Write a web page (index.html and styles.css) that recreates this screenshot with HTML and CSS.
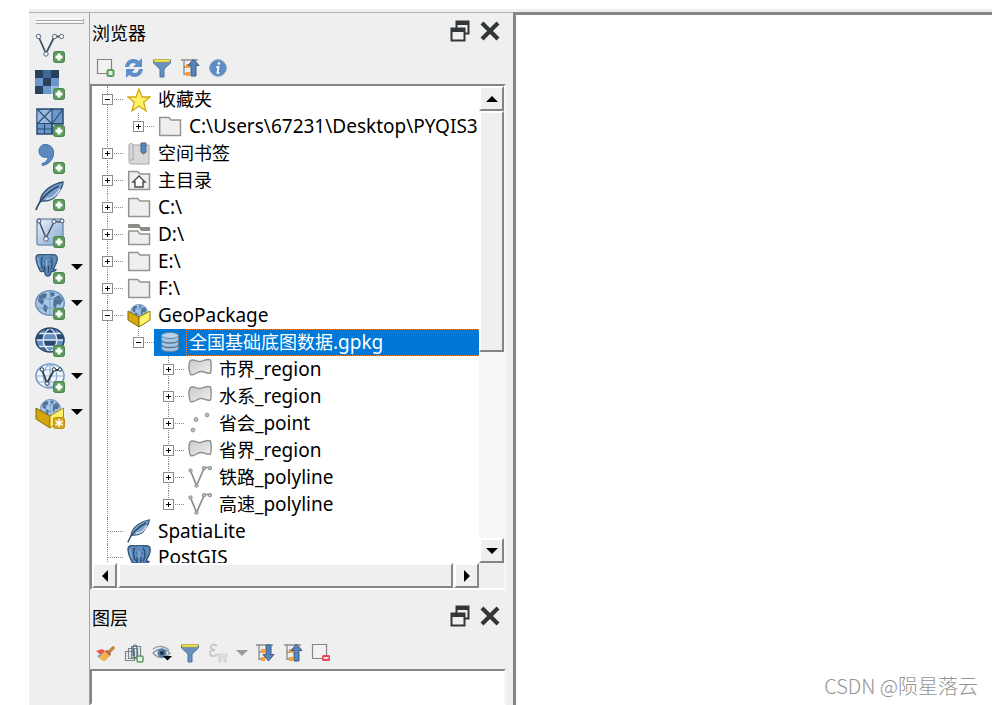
FILE: index.html
```
<!DOCTYPE html>
<html lang="zh-CN">
<head>
	<meta charset="UTF-8">
	<title>浏览器</title>
	<link rel="stylesheet" href="styles.css">
</head>
<body>
	<!-- 图标 -->
	<svg class="sprite" width="0" height="0" aria-hidden="true">
		<defs>
			<linearGradient id="grey" x1="0" y1="0" x2="1" y2="1"><stop offset="0" stop-color="#c9c9c9"/><stop offset="1" stop-color="#f0f0f0"/></linearGradient>
			<linearGradient id="blue" x1="0" y1="0" x2="1" y2="1"><stop offset="0" stop-color="#eef3f9"/><stop offset="1" stop-color="#7ea3cf"/></linearGradient>
		</defs>
		<symbol id="plus" viewBox="0 0 12 12">
			<rect x=".5" y=".5" width="11" height="11" rx="2" fill="#5a9a5a" stroke="#4c854d"/>
			<path d="M6 2.500v7M2.500 6h7" stroke="#fff" stroke-width="3"/>
		</symbol>
		<symbol id="vector" viewBox="0 0 30 30">
			<path d="M3.500 3.500l7.500 17L19.500 3.500h7" fill="none" stroke="#415368" stroke-width="1.800"/>
			<g fill="#f4f4f4" stroke="#56687a"><circle cx="3.500" cy="3.500" r="2.200"/><circle cx="11" cy="21" r="2.200"/><circle cx="19.500" cy="3.500" r="2.200"/><circle cx="26.500" cy="3.500" r="2.200"/></g>
			<use href="#plus" x="18" y="18" width="12" height="12"/>
		</symbol>
		<symbol id="raster" viewBox="0 0 30 30">
			<path fill="#6c97cb" d="M0 0h24v24H0z"/>
			<path fill="#27415f" d="M0 0h8v8H0zM16 0h8v8h-8zM8 8h8v8H8zM0 16h8v8H0z"/>
			<path fill="#3f6797" d="M8 0h8v8H8z"/>
			<path fill="#9dbde1" d="M16 16h8v8h-8z"/>
			<use href="#plus" x="18" y="18" width="12" height="12"/>
		</symbol>
		<symbol id="mesh" viewBox="0 0 30 30">
			<path d="M2 2h26v15H17v10H2z" fill="#6c97cb" stroke="#294a70" stroke-width="1.500"/>
			<path d="M2.500 3h14v13h-14z" fill="#9bb9dc"/>
			<path d="M17 1v26M2 16.500h26M9.500 17v10M2 22h15M2 2l15 15M17 2L2 17M28 2L17 17" fill="none" stroke="#294a70" stroke-width="1.100"/>
			<use href="#plus" x="18" y="18" width="12" height="12"/>
		</symbol>
		<symbol id="comma" viewBox="0 0 30 30">
			<path d="M10 .5c6 0 9 4 8.500 9.500-.6 6-5 10.500-11 11.500l-.5-2c4-1 6-3.500 6-6.500-5 1.500-9-1.500-9-5.700C4 3.500 6.500.5 10 .5z" fill="#5b88bf" stroke="#4270a6"/>
			<use href="#plus" x="18" y="18" width="12" height="12"/>
		</symbol>
		<symbol id="quill" viewBox="0 0 30 30">
			<path d="M28 1C18 3 7 9 5 20c8 1 15-2 18-8 3-4 5-6 5-11z" fill="#7ba0cd" stroke="#34526f" stroke-width="1.300"/>
			<path d="M1 29C4 20 13 10 24 5" fill="none" stroke="#2d4a68" stroke-width="1.800"/>
			<path d="M11 18c5 0 10-3 14-10" fill="none" stroke="#c1d5eb" stroke-width="2"/>
		</symbol>
		<symbol id="quill-add" viewBox="0 0 30 30">
			<use href="#quill" width="30" height="30"/>
			<use href="#plus" x="18" y="18" width="12" height="12"/>
		</symbol>
		<symbol id="virtual" viewBox="0 0 30 30">
			<rect x="2" y="1" width="26" height="26" rx="2" fill="url(#blue)" stroke="#7994b5" stroke-width="1.500"/>
			<path d="M4 3l7 17 8-16c3-2 6 2 8-1" fill="none" stroke="#41566d" stroke-width="1.500"/>
			<g fill="#edf2f8" stroke="#46596e"><circle cx="4" cy="3" r="2"/><circle cx="11" cy="21" r="2.300"/><circle cx="19" cy="3.500" r="2"/><circle cx="27" cy="3" r="2"/></g>
			<use href="#plus" x="18" y="18" width="12" height="12"/>
		</symbol>
		<symbol id="elephant" viewBox="0 0 24 24">
			<path d="M1 4C1 0 6 0 9 1c3-1.500 6-1 8 0 5-1 7 1 6 6-1 4-3 7-4 9l3 .5c-1 2-4 2-5 1.500-.5 2 0 5-4 5-3 0-3-4-3-6-2 2-4 2-5 0C3 13 1 8 1 4z" fill="#5e8abb" stroke="#2f5275" stroke-width="1.300"/>
			<path d="M8 3C5 6 7 9 7 12c0 2 1 3 3 4M16 3c3 3 1 5 2 8 0 2-1 3-2 5M10 12v5M14 12v8M9 8h1M15 8h1" fill="none" stroke="#294b6d" stroke-width="1.200"/>
			<path d="M3 4c0 4 1 6 2 9M12 6v7" stroke="#8aaed5" stroke-width="1.500" fill="none"/>
		</symbol>
		<symbol id="postgis-add" viewBox="0 0 30 30">
			<use href="#elephant" width="23" height="23"/>
			<use href="#plus" x="18" y="18" width="12" height="12"/>
		</symbol>
		<symbol id="earth" viewBox="0 0 30 26">
			<ellipse cx="15" cy="13" rx="14.300" ry="12.300" fill="#a9c6e7" stroke="#668bb4" stroke-width="1.300"/>
			<path d="M4 6l5-3 3 1-1 4-3 1 1 3-2 3-4-4zM15 2l5 1-1 3-3 1zM19 8l5-3 4 5-3 5-3-1-2 6-2-5zM9 14l4 3-2 6-3-4z" fill="#4f7196"/>
			<path d="M2 9h26M2 18h26M15 1v24" stroke="#6f95bd" stroke-width=".8" fill="none"/>
		</symbol>
		<symbol id="wms" viewBox="0 0 30 30">
			<use href="#earth" width="30" height="26"/>
			<use href="#plus" x="18" y="18" width="12" height="12"/>
		</symbol>
		<symbol id="wcs" viewBox="0 0 30 30">
			<ellipse cx="15" cy="13" rx="14" ry="12" fill="#6790c2"/>
			<path d="M3.500 6.500h6L8 13H1zM20.500 6.500h6L29 13h-7zM9 13h12v6H9zM4 19h5l3 5.500zM10 2h10l1 4H9z" fill="#2a4c73"/>
			<path d="M3 6.500h24M1 13h28M3 19.500h24M15 1C6 7 6 19 15 25M15 1c9 6 9 18 0 24" fill="none" stroke="#dfeaf6" stroke-width="1.400"/>
			<ellipse cx="15" cy="13" rx="14" ry="12" fill="none" stroke="#294767" stroke-width="1.600"/>
			<use href="#plus" x="18" y="18" width="12" height="12"/>
		</symbol>
		<symbol id="wfs" viewBox="0 0 30 30">
			<ellipse cx="15" cy="13" rx="14" ry="12" fill="#f2f6fb" stroke="#6e9bcd" stroke-width="1.600"/>
			<path d="M3 7h24M1 13h28M3 19h24M15 1v24M15 1C6 7 6 19 15 25M15 1c9 6 9 18 0 24" fill="none" stroke="#8eb1da" stroke-width="1.200"/>
			<path d="M7 7l5 13 7-13h6" fill="none" stroke="#313d49" stroke-width="1.800"/>
			<g fill="#eee" stroke="#313d49"><circle cx="7" cy="6.500" r="1.800"/><circle cx="12" cy="20.500" r="1.800"/><circle cx="19" cy="6.500" r="1.800"/><circle cx="25" cy="6.500" r="1.800"/></g>
			<use href="#plus" x="18" y="18" width="12" height="12"/>
		</symbol>
		<symbol id="new-gpkg" viewBox="0 0 30 30">
			<use href="#earth" x="5" y="0" width="21" height="18"/>
			<path d="M1 9l14 8v12L1 20z" fill="#d3a50c" stroke="#84670d"/>
			<path d="M15 17l13.500-8v11L15 29z" fill="#fff06a" stroke="#a48a1f"/>
			<rect x="18.500" y="18.500" width="11" height="11" rx="2" fill="#d5a51f" stroke="#bd901a"/>
			<path d="M24 20v8M20.500 22l7 4M27.500 22l-7 4" stroke="#fff" stroke-width="1.500"/>
		</symbol>
		<symbol id="float" viewBox="0 0 20 22">
			<path d="M6.500 1.500h12v12h-12z" fill="#efefef" stroke="#333638" stroke-width="2"/>
			<path d="M6 1h13v4H6z" fill="#333638"/>
			<path d="M1.500 8.500h13v12h-13z" fill="#efefef" stroke="#333638" stroke-width="2"/>
			<path d="M1 8h14v4H1z" fill="#333638"/>
		</symbol>
		<symbol id="close" viewBox="0 0 20 20">
			<path d="M2 2l16 16M18 2L2 18" stroke="#333638" stroke-width="4.200"/>
		</symbol>
		<symbol id="add-layer" viewBox="0 0 20 20">
			<path d="M1.500 1.500h14v14h-14z" fill="#f2f2f2" stroke="#858585" stroke-width="1.200"/>
			<rect x="11.500" y="12" width="6" height="6" rx="1.500" fill="#e7f1e7" stroke="#5a9a5a" stroke-width="2"/>
		</symbol>
		<symbol id="remove" viewBox="0 0 20 20">
			<path d="M1.500 1.500h14v14h-14z" fill="#f2f2f2" stroke="#858585" stroke-width="1.200"/>
			<rect x="11" y="12" width="8" height="6" rx="1.500" fill="#e44a54"/><path d="M12.500 15h5" stroke="#fff" stroke-width="1.500"/>
		</symbol>
		<symbol id="refresh" viewBox="0 0 20 20">
			<path d="M1 9C2 1 10-1 15 3l3-3v9h-9l3-3C9 4 6 5 5 9z" fill="#5f8fca"/>
			<path d="M19 11c-1 8-9 10-14 6l-3 3v-9h9l-3 3c3 2 6 1 7-3z" fill="#5f8fca"/>
		</symbol>
		<symbol id="filter" viewBox="0 0 20 20">
			<path d="M1.500 2h17v3L12 11v8H8v-8L1.500 5z" fill="#6791c1" stroke="#4a719c"/>
			<path d="M2 1.500h16V4H2z" fill="#f5e34a" stroke="#b7a63c" stroke-width=".6"/>
		</symbol>
		<symbol id="collapse" viewBox="0 0 20 20">
			<path d="M4 2v15M1 2h17M4 9h5M4 16h5" fill="none" stroke="#8c8c8c" stroke-width="1.300"/>
			<path d="M6 6h4v4H6zM6 14h4v4H6z" fill="#ff9d2e"/>
			<path d="M13.500 1L19 7.500h-3V18h-5V7.500H8z" fill="#5984b5" stroke="#395f8a"/>
		</symbol>
		<symbol id="expand" viewBox="0 0 20 20">
			<path d="M4 2v15M1 2h17M4 9h5M4 16h5" fill="none" stroke="#8c8c8c" stroke-width="1.300"/>
			<path d="M6 6h4v4H6zM6 14h4v4H6z" fill="#ff9d2e"/>
			<path d="M13.500 18L19 11.500h-3V2h-5v9.500H8z" fill="#5984b5" stroke="#395f8a"/>
		</symbol>
		<symbol id="info" viewBox="0 0 20 20">
			<circle cx="10" cy="10" r="8.300" fill="#5e8dc6" stroke="#7a9ccc"/>
			<circle cx="11" cy="5.500" r="1.300" fill="#fff"/><path d="M8 9h2.500L9.500 15h2" fill="none" stroke="#fff" stroke-width="1.700"/>
		</symbol>
		<symbol id="brush" viewBox="0 0 20 20">
			<path d="M0 8l6-2 5 3-5 4z" fill="#e8574a"/><path d="M1 13l6-3 3 3-4 4z" fill="#6e9bd0"/>
			<path d="M11 9l6-6 2 2-6 6z" fill="#c98c3f" stroke="#a97836" stroke-width=".6"/>
			<path d="M3 14l6-6 5 5-5 5c-3 0-5-2-6-4z" fill="#f0b44a"/><path d="M9 8l2-1 4 4-1 2z" fill="#a4604a"/>
		</symbol>
		<symbol id="group" viewBox="0 0 20 20">
			<path d="M1.500 8.500h9v9h-9zM4.500 5.500h9v10h-9zM7.500 3.500h9v11h-9z" fill="#eee" stroke="#7e8588" stroke-width="1.200"/>
			<path d="M9 13V5c0-4 4-4 4 0v8c0 2-3 2-3 0V6" fill="none" stroke="#506b87" stroke-width="1.200"/>
			<rect x="13" y="13" width="6" height="6" rx="1.500" fill="#e7f1e7" stroke="#5a9a5a" stroke-width="1.500"/>
		</symbol>
		<symbol id="eye" viewBox="0 0 20 20">
			<path d="M1 6c5-4 12-3 16 1M1 10c5-5 12-5 17 0-5 6-12 6-17 0z" fill="#e9edf0" stroke="#90999f" stroke-width="1.300"/>
			<circle cx="10" cy="10" r="4.500" fill="#527da9"/><circle cx="10" cy="10" r="2" fill="#203448"/>
			<path d="M11 13h9l-4.500 4.500z" fill="#000"/>
		</symbol>
		<symbol id="expression" viewBox="0 0 20 20">
			<path d="M9 3C6 0 2 2 3 5c0 1 2 2 4 2-3 0-5 1-5 3 0 4 5 4 7 1" fill="none" stroke="#c7c7c7" stroke-width="1.800"/>
			<path d="M10 11h9l-1 3v5h-2v-5h-3v5h-2v-5z" fill="#e2e2e2" stroke="#cfcfcf"/>
		</symbol>
		<symbol id="star" viewBox="0 0 24 24">
			<path d="M12 1l3 8h8l-6.300 5.200L19 23l-7-5-7 5 2.300-8.800L1 9h8z" fill="#fff266" stroke="#d1a914" stroke-width="1.300"/>
		</symbol>
		<symbol id="folder" viewBox="0 0 24 24">
			<path d="M1.700 20.500V2.500h9L13 5h9.500v15.500z" fill="#efefef" stroke="#93938f" stroke-width="1.500"/>
		</symbol>
		<symbol id="home" viewBox="0 0 24 24">
			<use href="#folder" width="24" height="24"/>
			<path d="M6 13l6-6 6 6h-2v5H8v-5z" fill="#fff" stroke="#484848" stroke-width="1.400"/>
		</symbol>
		<symbol id="folder-open" viewBox="0 0 24 24">
			<path d="M1 1h11l2 3h9v4h-9l-2-3H1z" fill="#8c8d88"/>
			<path d="M1.700 21.500V8h9l2.300 3h9.500v10.500z" fill="#efefef" stroke="#93938f" stroke-width="1.500"/>
		</symbol>
		<symbol id="bookmark" viewBox="0 0 24 24">
			<path d="M2 3c0-2 4-2 4 0h16v19H4c-2 0-2-2-2-4z" fill="#d8d8d8" stroke="#a6a6a6"/>
			<path d="M6 3v15H3" fill="none" stroke="#a6a6a6"/>
			<path d="M14 1h5v9l-2.500 2L14 10z" fill="#5b87b8" stroke="#43698f"/>
		</symbol>
		<symbol id="gpkg" viewBox="0 0 24 24">
			<use href="#earth" x="3" y="0" width="18" height="15"/>
			<path d="M1 7l11 6v10L1 16z" fill="#d8aa09" stroke="#84670d"/>
			<path d="M12 13l11-6v9l-11 7z" fill="#fff267" stroke="#84740d"/>
		</symbol>
		<symbol id="database" viewBox="0 0 24 24">
			<path d="M3.500 4.500v13c0 4 17 4 17 0v-13" fill="#a5c5e7" stroke="#68889f"/>
			<ellipse cx="12" cy="4.500" rx="8.500" ry="3" fill="#bad4ee" stroke="#68889f"/>
			<path d="M3.500 9c0 4 17 4 17 0M3.500 13.500c0 4 17 4 17 0" fill="none" stroke="#55758e" stroke-width="1.400"/>
		</symbol>
		<symbol id="polygon" viewBox="0 0 24 24">
			<path d="M2 3c3-3 6 .5 10 .5S18 0 22.500 2c1 4 1 8 0 13-4 1.500-6-2-10-1.500-4 .5-6 4.500-10 3-2-4-2-10-.5-13.500z" fill="url(#grey)" stroke="#8f8f8f" stroke-width="1.400"/>
		</symbol>
		<symbol id="points" viewBox="0 0 24 24">
			<g fill="#bbb" stroke="#959595"><circle cx="5" cy="18" r="1.900"/><circle cx="8" cy="7.500" r="1.900"/><circle cx="19" cy="3" r="1.900"/></g>
		</symbol>
		<symbol id="line" viewBox="0 0 24 24">
			<path d="M2.500 4.500l6 15 8-18h6" fill="none" stroke="#8e8e8e" stroke-width="1.700"/>
			<g fill="#bbb" stroke="#8e8e8e"><circle cx="2.500" cy="4.500" r="1.700"/><circle cx="8.500" cy="19.500" r="1.700"/><circle cx="16" cy="2.200" r="1.700"/><circle cx="22" cy="2.200" r="1.700"/></g>
		</symbol>
	</svg>

	<div class="app">
		<!-- 左侧工具栏 -->
		<nav class="toolbar">
			<div class="grip"><i></i><i></i></div>
			<div class="tool"><button aria-label="矢量图层"><svg><use href="#vector"/></svg></button></div>
			<div class="tool"><button aria-label="栅格图层"><svg><use href="#raster"/></svg></button></div>
			<div class="tool"><button aria-label="网格图层"><svg><use href="#mesh"/></svg></button></div>
			<div class="tool"><button aria-label="分隔文本"><svg><use href="#comma"/></svg></button></div>
			<div class="tool"><button aria-label="SpatiaLite"><svg><use href="#quill-add"/></svg></button></div>
			<div class="tool"><button aria-label="虚拟图层"><svg><use href="#virtual"/></svg></button></div>
			<div class="tool menu"><button aria-label="PostGIS"><svg><use href="#postgis-add"/></svg></button><button class="more" aria-label="更多"></button></div>
			<div class="tool menu"><button aria-label="WMS"><svg><use href="#wms"/></svg></button><button class="more" aria-label="更多"></button></div>
			<div class="tool"><button aria-label="WCS"><svg><use href="#wcs"/></svg></button></div>
			<div class="tool menu"><button aria-label="WFS"><svg><use href="#wfs"/></svg></button><button class="more" aria-label="更多"></button></div>
			<div class="tool menu"><button aria-label="GeoPackage"><svg><use href="#new-gpkg"/></svg></button><button class="more" aria-label="更多"></button></div>
		</nav>

		<aside class="docks">
			<!-- 浏览器 -->
			<section class="dock">
				<header class="title">
					<h2>浏览器</h2>
					<button aria-label="浮动"><svg class="float"><use href="#float"/></svg></button>
					<button aria-label="关闭"><svg><use href="#close"/></svg></button>
				</header>
				<div class="actions">
					<button aria-label="添加图层"><svg><use href="#add-layer"/></svg></button>
					<button aria-label="刷新"><svg><use href="#refresh"/></svg></button>
					<button aria-label="过滤"><svg><use href="#filter"/></svg></button>
					<button aria-label="全部折叠"><svg><use href="#collapse"/></svg></button>
					<button aria-label="属性"><svg><use href="#info"/></svg></button>
				</div>
				<div class="frame browser">
					<div class="view">
						<ul class="tree">
							<li>
								<div class="row"><button class="toggle open" aria-label="折叠"></button><a href="#" class="item"><svg><use href="#star"/></svg><span class="label">收藏夹</span></a></div>
								<ul>
									<li><div class="row"><button class="toggle" aria-label="展开"></button><a href="#" class="item"><svg><use href="#folder"/></svg><span class="label latin">C:\Users\67231\Desktop\PYQIS3</span></a></div></li>
								</ul>
							</li>
							<li><div class="row"><button class="toggle" aria-label="展开"></button><a href="#" class="item"><svg><use href="#bookmark"/></svg><span class="label">空间书签</span></a></div></li>
							<li><div class="row"><button class="toggle" aria-label="展开"></button><a href="#" class="item"><svg><use href="#home"/></svg><span class="label">主目录</span></a></div></li>
							<li><div class="row"><button class="toggle" aria-label="展开"></button><a href="#" class="item"><svg><use href="#folder"/></svg><span class="label latin">C:\</span></a></div></li>
							<li><div class="row"><button class="toggle" aria-label="展开"></button><a href="#" class="item"><svg><use href="#folder-open"/></svg><span class="label latin">D:\</span></a></div></li>
							<li><div class="row"><button class="toggle" aria-label="展开"></button><a href="#" class="item"><svg><use href="#folder"/></svg><span class="label latin">E:\</span></a></div></li>
							<li><div class="row"><button class="toggle" aria-label="展开"></button><a href="#" class="item"><svg><use href="#folder"/></svg><span class="label latin">F:\</span></a></div></li>
							<li>
								<div class="row"><button class="toggle open" aria-label="折叠"></button><a href="#" class="item"><svg><use href="#gpkg"/></svg><span class="label latin">GeoPackage</span></a></div>
								<ul>
									<li>
										<div class="row"><button class="toggle open" aria-label="折叠"></button><a href="#" class="item selected"><svg><use href="#database"/></svg><span class="label">全国基础底图数据<span class="latin">.gpkg</span></span></a></div>
										<ul>
											<li><div class="row"><button class="toggle" aria-label="展开"></button><a href="#" class="item"><svg><use href="#polygon"/></svg><span class="label">市界<span class="latin">_region</span></span></a></div></li>
											<li><div class="row"><button class="toggle" aria-label="展开"></button><a href="#" class="item"><svg><use href="#polygon"/></svg><span class="label">水系<span class="latin">_region</span></span></a></div></li>
											<li><div class="row"><button class="toggle" aria-label="展开"></button><a href="#" class="item"><svg><use href="#points"/></svg><span class="label">省会<span class="latin">_point</span></span></a></div></li>
											<li><div class="row"><button class="toggle" aria-label="展开"></button><a href="#" class="item"><svg><use href="#polygon"/></svg><span class="label">省界<span class="latin">_region</span></span></a></div></li>
											<li><div class="row"><button class="toggle" aria-label="展开"></button><a href="#" class="item"><svg><use href="#line"/></svg><span class="label">铁路<span class="latin">_polyline</span></span></a></div></li>
											<li><div class="row"><button class="toggle" aria-label="展开"></button><a href="#" class="item"><svg><use href="#line"/></svg><span class="label">高速<span class="latin">_polyline</span></span></a></div></li>
										</ul>
									</li>
								</ul>
							</li>
							<li><div class="row provider"><span class="toggle leaf"></span><a href="#" class="item"><svg><use href="#quill"/></svg><span class="label latin">SpatiaLite</span></a></div></li>
							<li><div class="row provider"><span class="toggle leaf"></span><a href="#" class="item"><svg><use href="#elephant"/></svg><span class="label latin">PostGIS</span></a></div></li>
						</ul>
					</div>
					<div class="scroll vertical">
						<button class="bevel" aria-label="向上"><i class="arrow up"></i></button>
						<div class="bevel thumb"></div>
						<button class="bevel" aria-label="向下"><i class="arrow down"></i></button>
					</div>
					<div class="scroll horizontal">
						<button class="bevel" aria-label="向左"><i class="arrow left"></i></button>
						<div class="bevel thumb"></div>
						<button class="bevel" aria-label="向右"><i class="arrow right"></i></button>
					</div>
				</div>
			</section>

			<!-- 图层 -->
			<section class="dock layers">
				<header class="title">
					<h2>图层</h2>
					<button aria-label="浮动"><svg class="float"><use href="#float"/></svg></button>
					<button aria-label="关闭"><svg><use href="#close"/></svg></button>
				</header>
				<div class="actions">
					<button aria-label="样式"><svg><use href="#brush"/></svg></button>
					<button aria-label="添加组"><svg><use href="#group"/></svg></button>
					<button aria-label="可见性"><svg><use href="#eye"/></svg></button>
					<button aria-label="过滤图例"><svg><use href="#filter"/></svg></button>
					<button aria-label="表达式过滤" disabled><svg><use href="#expression"/></svg></button>
					<button class="more" aria-label="更多" disabled></button>
					<button aria-label="全部展开"><svg><use href="#expand"/></svg></button>
					<button aria-label="全部折叠"><svg><use href="#collapse"/></svg></button>
					<button aria-label="移除图层"><svg><use href="#remove"/></svg></button>
				</div>
				<div class="frame"></div>
			</section>
		</aside>

		<main class="canvas">
			<p class="watermark">CSDN @陨星落云</p>
		</main>
	</div>
</body>
</html>
```
FILE: styles.css
```
* {
	box-sizing: border-box;
}

body {
	margin: 0;
	height: 100vh;
	padding: 9px 0 0 29px;
	overflow: hidden;
	background: #fff;
	color: #000;
	font: 18px/27px "Noto Sans", "Noto Sans CJK SC", sans-serif;
}

h2, p, ul {
	margin: 0;
	padding: 0;
	font-size: 18px;
	font-weight: normal;
	list-style: none;
}

button {
	display: flex;
	align-items: center;
	justify-content: center;
	padding: 0;
	border: 0;
	background: none;
}

svg {
	display: block;
	flex: none;
}

.sprite {
	position: absolute;
}

.latin {
	font-size: 19px;
}

.app {
	display: flex;
	height: 100%;
	padding-top: 3px;
	background: linear-gradient(#b2b2b2, #b2b2b2) 0 3px / 100% 1px no-repeat #efefef;
}

/* 左侧工具栏 */
.toolbar {
	flex: none;
	width: 61px;
	padding: 6px 0 0 6px;
	border-right: 1px solid #a0a0a0;
}

.grip {
	margin: 0 5px 5px 0;
}

.grip i {
	display: block;
	height: 3px;
	border: 1px solid #a6a6a6;
	border-top-color: #fff;
	border-left-color: #fff;
}

.tool {
	display: flex;
	align-items: center;
	height: 37px;
}

.tool.menu {
	height: 36px;
}

.tool svg {
	width: 30px;
	height: 30px;
}

.more {
	width: 24px;
	height: 30px;
}

.more::before {
	content: "";
	border: 6px solid transparent;
	border-top-color: #000;
	border-bottom: 0;
}

.tool .more {
	padding-bottom: 4px;
}

/* 停靠面板 */
.docks {
	display: flex;
	flex: none;
	flex-direction: column;
	gap: 9px;
	width: 423px;
	padding: 2px 7px 0 0;
}

.dock {
	display: flex;
	flex-direction: column;
}

.layers {
	flex: 1;
}

.title {
	display: flex;
	align-items: center;
	gap: 10px;
	height: 38px;
	padding: 0 6px 0 2px;
}

.title h2 {
	flex: 1;
}

.title button {
	height: 26px;
	margin-bottom: 5px;
}

.title svg {
	width: 20px;
	height: 20px;
}

.title .float {
	height: 22px;
}

.actions {
	display: flex;
	align-items: center;
	height: 32px;
	padding-left: 2px;
}

.actions button {
	width: 28px;
	height: 28px;
}

.actions svg {
	width: 20px;
	height: 20px;
}

.actions .more {
	width: 19px;
}

.actions .more::before {
	border-top-color: #9a9a9a;
}

.frame {
	flex: 1;
	border: 2px solid;
	border-color: #858585 #f7f7f7 #fff #858585;
	background: #fff;
}

.browser {
	display: grid;
	flex: none;
	grid-template: 1fr 25px / 1fr 25px;
	height: 506px;
	background: #efefef;
}

.view {
	overflow: hidden;
	background: #fff;
}

/* 树 */
.tree li {
	position: relative;
}

.tree ul {
	padding-left: 31px;
}

.tree ul ul {
	padding-left: 30px;
}

.tree li::before {
	content: "";
	position: absolute;
	top: 0;
	bottom: 0;
	left: 15px;
	border-left: 1px dotted #888;
}

.tree ul > li:last-child::before {
	bottom: auto;
	height: 13px;
}

.row {
	display: flex;
	align-items: center;
	height: 27px;
	padding-left: 10px;
}

.row.provider {
	height: 26px;
}

.toggle {
	position: relative;
	flex: none;
	width: 11px;
	height: 11px;
	border: 1px solid #8c8c8c;
	background:
		linear-gradient(#000, #000) center / 5px 1px no-repeat,
		linear-gradient(#000, #000) center / 1px 5px no-repeat,
		#fff;
}

.toggle.open {
	background: linear-gradient(#000, #000) center / 5px 1px no-repeat, #fff;
}

.toggle.leaf {
	border-color: transparent;
	background: none;
}

.toggle::after {
	content: "";
	position: absolute;
	top: 4px;
	left: 11px;
	width: 9px;
	border-top: 1px dotted #888;
}

.toggle.leaf::after {
	left: 5px;
	width: 15px;
}

.item {
	display: flex;
	flex: 1;
	align-items: center;
	min-width: 0;
	height: 27px;
	margin-left: 10px;
	padding-left: 4px;
	color: #000;
	text-decoration: none;
}

.provider .item {
	height: 26px;
}

.item svg {
	width: 24px;
	height: 24px;
}

.label {
	flex: 1;
	height: 100%;
	margin-left: 4px;
	padding-left: 2px;
	border: 1px dotted transparent;
	line-height: 25px;
	white-space: nowrap;
}

.provider .label {
	line-height: 24px;
}

.selected {
	background: #0078d7;
	color: #fff;
}

.selected .label {
	border-color: #ff8728;
	border-right: 0;
}

/* 滚动条 */
.scroll {
	display: flex;
	background: repeating-conic-gradient(#efefef 0 25%, #fff 0 50%) 0 0 / 2px 2px;
}

.vertical {
	flex-direction: column;
}

.horizontal {
	gap: 1px;
}

.bevel {
	flex: none;
	width: 25px;
	height: 25px;
	border: 2px solid;
	border-color: #fff #858585 #858585 #fff;
	background: #efefef;
}

.vertical .thumb {
	height: 241px;
	margin-bottom: auto;
}

.horizontal .thumb {
	flex: 1;
	width: auto;
}

.arrow {
	border: 6px solid transparent;
}

.up {
	border-top: 0;
	border-bottom-color: #000;
}

.down {
	border-bottom: 0;
	border-top-color: #000;
}

.left {
	border-left: 0;
	border-right-color: #000;
}

.right {
	border-right: 0;
	border-left-color: #000;
}

/* 画布 */
.canvas {
	display: flex;
	flex: 1;
	align-items: flex-end;
	justify-content: flex-end;
	padding: 0 14px 6px 0;
	border: solid #858585;
	border-width: 3px 0 0 3px;
	background: #fff;
}

.watermark {
	color: #949494;
	font: 300 20px/27px "Noto Sans CJK SC", sans-serif;
}
```
